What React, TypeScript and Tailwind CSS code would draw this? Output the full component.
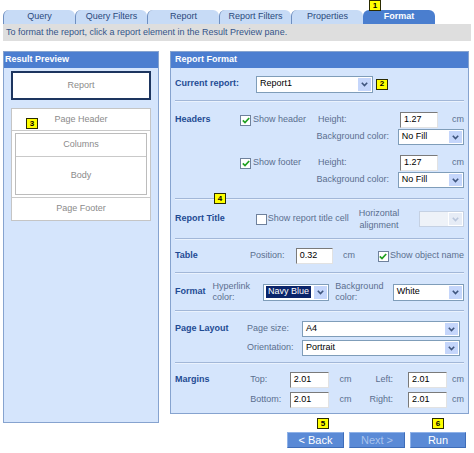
import React from "react";

const tabs = ["Query", "Query Filters", "Report", "Report Filters", "Properties", "Format"];

function Badge({ n, className = "" }: { n: string; className?: string }) {
  return (
    <div
      className={`w-[12px] h-[11px] bg-[#ffff00] border border-[#2b2b00] flex items-center justify-center text-[8px] font-bold text-black leading-none ${className}`}
    >
      {n}
    </div>
  );
}

function Chevron({ faded }: { faded?: boolean }) {
  return (
    <svg width="7" height="5" viewBox="0 0 7 5">
      <polyline
        points="0.8,0.8 3.5,3.6 6.2,0.8"
        fill="none"
        stroke={faded ? "#b9c6dc" : "#3f557d"}
        strokeWidth="1.6"
      />
    </svg>
  );
}

function Select({
  w,
  value,
  highlight,
  disabled,
  h = "h-[16px]",
}: {
  w: string;
  value?: string;
  highlight?: boolean;
  disabled?: boolean;
  h?: string;
}) {
  return (
    <div
      className={`${w} ${h} flex items-center border ${
        disabled ? "border-[#c5d1e3] bg-[#eef2f8]" : "border-[#7f9db9] bg-white"
      }`}
    >
      <div className="flex-1 h-full flex items-center pl-[2px] pr-[2px]">
        {highlight ? (
          <span className="w-full h-[12px] bg-[#0a246a] text-white pl-[2px] flex items-center">{value}</span>
        ) : (
          <span className="text-black pl-[1px]">{value}</span>
        )}
      </div>
      <div
        className={`w-[15px] h-full border border-white flex items-center justify-center ${
          disabled ? "bg-[#e6ecf6]" : "bg-[#c5d6fb]"
        }`}
      >
        <Chevron faded={disabled} />
      </div>
    </div>
  );
}

function Input({ w, value }: { w: string; value: string }) {
  return (
    <div
      className={`${w} h-[16px] bg-white border border-[#7a7a7a] border-r-[#e2e2e2] border-b-[#e2e2e2] flex items-center pl-[3px] text-black`}
    >
      {value}
    </div>
  );
}

function Check({ checked }: { checked?: boolean }) {
  return (
    <div className="w-[11px] h-[11px] bg-white border border-[#6f819c] flex items-center justify-center shrink-0">
      {checked && (
        <svg width="8" height="7" viewBox="0 0 8 7">
          <polyline points="0.8,3.4 3,5.6 7.2,1" fill="none" stroke="#21a121" strokeWidth="1.7" />
        </svg>
      )}
    </div>
  );
}

function Sep() {
  return <div className="h-[2px] border-t border-[#a2b7d8] border-b border-b-[#eaf2fd]" />;
}

export default function App() {
  return (
    <div className="w-[474px] h-[453px] bg-white relative overflow-hidden whitespace-nowrap font-['Liberation_Sans',Arial,sans-serif] text-[9px] text-[#5b6f8f]">
      {/* Tabs */}
      <div className="h-[24px] pl-[3px] pt-[10px] flex">
        {tabs.map((t) => (
          <div
            key={t}
            className={`w-[72px] h-[14px] rounded-tl-[6px] rounded-tr-[6px] flex items-center justify-center ${
              t === "Format"
                ? "bg-[#4a7ecf] text-white font-bold"
                : "bg-[#c7dbf6] text-[#2b4a7c] border-l border-[#6f8fc0]"
            }`}
          >
            {t}
          </div>
        ))}
      </div>
      <Badge n="1" className="absolute left-[369px] top-[0px]" />

      {/* Instruction bar */}
      <div className="mx-[3px] h-[17px] bg-[#dedede] text-[#35558a] flex items-center pl-[3px]">
        To format the report, click a report element in the Result Preview pane.
      </div>

      {/* Panels */}
      <div className="flex pl-[3px] mt-[10px] gap-[11px]">
        {/* Result Preview */}
        <div className="w-[156px] h-[372px] bg-[#d5e5fc] border border-[#86a3cf]">
          <div className="h-[16px] bg-[#4c7ed0] text-white font-bold flex items-center pl-[1px]">
            Result Preview
          </div>
          <div className="pl-[7px] pt-[3px] text-[#8b8b8b]">
            <div className="w-[140px] h-[29px] bg-white border-2 border-[#1d355f] flex items-center justify-center">
              Report
            </div>
            <div className="w-[140px] mt-[8px] bg-white border border-[#c5c5c5] relative">
              <div className="h-[22px] border-b border-[#c9c9c9] flex items-center justify-center">
                Page Header
              </div>
              <Badge n="3" className="absolute left-[14px] top-[9px]" />
              <div className="px-[3px] py-[2px]">
                <div className="border border-[#bcbcbc]">
                  <div className="h-[23px] border-b border-[#c9c9c9] flex items-center justify-center">
                    Columns
                  </div>
                  <div className="h-[37px] flex items-center justify-center">Body</div>
                </div>
              </div>
              <div className="h-[23px] border-t border-[#c9c9c9] flex items-center justify-center">
                Page Footer
              </div>
            </div>
          </div>
        </div>

        {/* Report Format */}
        <div className="flex flex-col">
          <div className="w-[299px] bg-[#d5e5fc] border border-[#86a3cf]">
            <div className="h-[16px] bg-[#4c7ed0] text-white font-bold flex items-center pl-[4px]">
              Report Format
            </div>
            <div className="px-[4px]">
              {/* Current report */}
              <div className="h-[32px] flex items-center">
                <span className="w-[81px] font-bold text-[#1f4b94]">Current report:</span>
                <Select w="w-[117px]" h="h-[17px]" value="Report1" />
                <Badge n="2" className="ml-[3px]" />
              </div>
              <Sep />

              {/* Headers */}
              <div className="h-[96px] pt-[10px] flex flex-col">
                <div className="h-[16px] flex items-center">
                  <span className="w-[65px] font-bold text-[#1f4b94]">Headers</span>
                  <div className="w-[78px] flex items-center gap-[2px]">
                    <Check checked />
                    <span>Show header</span>
                  </div>
                  <span className="w-[82px]">Height:</span>
                  <Input w="w-[38px]" value="1.27" />
                  <span className="ml-[14px]">cm</span>
                </div>
                <div className="h-[16px] mt-[1px] flex items-center">
                  <span className="w-[143px]" />
                  <span className="w-[82px]">Background color:</span>
                  <Select w="w-[67px]" value="No Fill" />
                </div>
                <div className="h-[16px] mt-[10px] flex items-center">
                  <span className="w-[65px]" />
                  <div className="w-[78px] flex items-center gap-[2px]">
                    <Check checked />
                    <span>Show footer</span>
                  </div>
                  <span className="w-[82px]">Height:</span>
                  <Input w="w-[38px]" value="1.27" />
                  <span className="ml-[14px]">cm</span>
                </div>
                <div className="h-[16px] mt-[1px] flex items-center">
                  <span className="w-[143px]" />
                  <span className="w-[82px]">Background color:</span>
                  <Select w="w-[67px]" value="No Fill" />
                </div>
              </div>
              <Sep />

              {/* Report Title */}
              <div className="h-[38px] flex items-center">
                <span className="w-[81px] font-bold text-[#1f4b94]">Report Title</span>
                <div className="w-[101px] flex items-center gap-[1px]">
                  <Check />
                  <span>Show report title cell</span>
                </div>
                <span className="w-[46px] text-center leading-[12px]">
                  Horizontal
                  <br />
                  alignment
                </span>
                <div className="ml-[17px]">
                  <Select w="w-[45px]" disabled />
                </div>
              </div>
              <Sep />

              {/* Table */}
              <div className="h-[32px] flex items-center">
                <span className="w-[77px] font-bold text-[#1f4b94]">Table</span>
                <span className="w-[47px]">Position:</span>
                <Input w="w-[38px]" value="0.32" />
                <span className="ml-[10px] w-[36px]">cm</span>
                <div className="flex items-center gap-[1px]">
                  <Check checked />
                  <span>Show object name</span>
                </div>
              </div>
              <Sep />

              {/* Format */}
              <div className="h-[36px] flex items-center">
                <span className="w-[38px] font-bold text-[#1f4b94]">Format</span>
                <span className="w-[51px] leading-[11px]">
                  Hyperlink
                  <br />
                  color:
                </span>
                <Select w="w-[67px]" h="h-[17px]" value="Navy Blue" highlight />
                <span className="ml-[6px] w-[58px] leading-[11px]">
                  Background
                  <br />
                  color:
                </span>
                <Select w="w-[72px]" h="h-[17px]" value="White" />
              </div>
              <Sep />

              {/* Page Layout */}
              <div className="h-[50px] pt-[9px] flex flex-col">
                <div className="h-[16px] flex items-center">
                  <span className="w-[72px] font-bold text-[#1f4b94]">Page Layout</span>
                  <span className="w-[55px]">Page size:</span>
                  <Select w="w-[158px]" value="A4" />
                </div>
                <div className="h-[16px] mt-[3px] flex items-center">
                  <span className="w-[72px]" />
                  <span className="w-[55px]">Orientation:</span>
                  <Select w="w-[158px]" value="Portrait" />
                </div>
              </div>
              <Sep />

              {/* Margins */}
              <div className="h-[49px] pt-[8px] flex flex-col">
                <div className="h-[16px] flex items-center">
                  <span className="w-[76px] font-bold text-[#1f4b94]">Margins</span>
                  <span className="w-[40px]">Top:</span>
                  <Input w="w-[39px]" value="2.01" />
                  <span className="ml-[11px] w-[14px]">cm</span>
                  <span className="w-[40px] text-right">Left:</span>
                  <div className="ml-[15px]">
                    <Input w="w-[39px]" value="2.01" />
                  </div>
                  <span className="ml-[5px]">cm</span>
                </div>
                <div className="h-[16px] mt-[4px] flex items-center">
                  <span className="w-[76px]" />
                  <span className="w-[40px]">Bottom:</span>
                  <Input w="w-[39px]" value="2.01" />
                  <span className="ml-[11px] w-[14px]">cm</span>
                  <span className="w-[40px] text-right">Right:</span>
                  <div className="ml-[15px]">
                    <Input w="w-[39px]" value="2.01" />
                  </div>
                  <span className="ml-[5px]">cm</span>
                </div>
              </div>
            </div>
          </div>

          {/* Buttons */}
          <div className="relative flex justify-end gap-[5px] pr-[3px] mt-[18px] text-[11px]">
            <Badge n="5" className="absolute left-[147px] top-[-14px]" />
            <Badge n="6" className="absolute left-[262px] top-[-14px]" />
            <div className="w-[57px] h-[16px] bg-[#5a8ad6] border border-[#8fb2e8] border-b-[#3f6db8] border-r-[#3f6db8] text-white flex items-center justify-center">
              &lt; Back
            </div>
            <div className="w-[56px] h-[16px] bg-[#5a8ad6] border border-[#8fb2e8] border-b-[#3f6db8] border-r-[#3f6db8] text-[#a9c3ec] flex items-center justify-center">
              Next &gt;
            </div>
            <div className="w-[56px] h-[16px] bg-[#5a8ad6] border border-[#8fb2e8] border-b-[#3f6db8] border-r-[#3f6db8] text-white flex items-center justify-center">
              Run
            </div>
          </div>
        </div>
      </div>
      <Badge n="4" className="absolute left-[214px] top-[193px]" />
    </div>
  );
}
